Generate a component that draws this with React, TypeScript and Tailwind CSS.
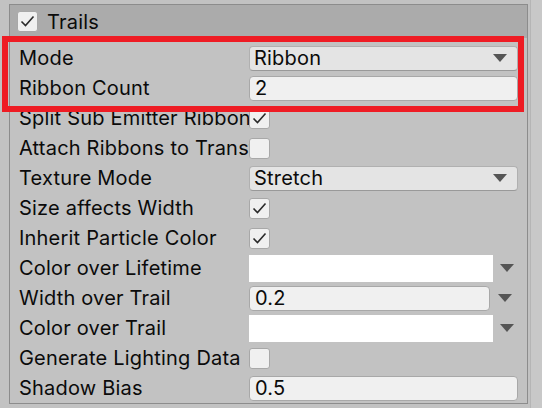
import React from "react";

type Row =
  | { label: string; kind: "dropdown"; value: string }
  | { label: string; kind: "text"; value: string }
  | { label: string; kind: "check"; checked: boolean }
  | { label: string; kind: "color" }
  | { label: string; kind: "curve"; value: string };

const ROWS: Row[] = [
  { label: "Mode", kind: "dropdown", value: "Ribbon" },
  { label: "Ribbon Count", kind: "text", value: "2" },
  { label: "Split Sub Emitter Ribbons", kind: "check", checked: true },
  { label: "Attach Ribbons to Transform", kind: "check", checked: false },
  { label: "Texture Mode", kind: "dropdown", value: "Stretch" },
  { label: "Size affects Width", kind: "check", checked: true },
  { label: "Inherit Particle Color", kind: "check", checked: true },
  { label: "Color over Lifetime", kind: "color" },
  { label: "Width over Trail", kind: "curve", value: "0.2" },
  { label: "Color over Trail", kind: "color" },
  { label: "Generate Lighting Data", kind: "check", checked: false },
  { label: "Shadow Bias", kind: "text", value: "0.5" },
];

function Triangle() {
  return (
    <svg width="14" height="8" viewBox="0 0 14 8" className="shrink-0">
      <path d="M0 0 H14 L7 8 Z" fill="#555555" />
    </svg>
  );
}

function Checkbox({ checked }: { checked: boolean }) {
  return (
    <div className="flex h-[21px] w-[21px] items-center justify-center rounded-[3px] border border-[#a8a8a8] bg-[#f0f0f0]">
      {checked && (
        <svg width="17" height="17" viewBox="0 0 17 17">
          <path d="M2.5 8.5 L6.5 12.5 L14.5 3.5" fill="none" stroke="#2a2a2a" strokeWidth="1.6" />
        </svg>
      )}
    </div>
  );
}

function Field({ row }: { row: Row }) {
  switch (row.kind) {
    case "dropdown":
      return (
        <div className="flex h-[25px] w-[269px] items-center justify-between rounded-[4px] border border-[#b0b0b0] border-b-[#999] bg-[#e4e4e4] pl-[4px] pr-[10px]">
          <span>{row.value}</span>
          <Triangle />
        </div>
      );
    case "text":
      return (
        <div className="flex h-[25px] w-[269px] items-center rounded-[4px] border border-[#a8a8a8] bg-[#f0f0f0] pl-[5px]">
          {row.value}
        </div>
      );
    case "check":
      return <Checkbox checked={row.checked} />;
    case "color":
      return (
        <div className="flex items-center">
          <div className="h-[27px] w-[244px] bg-white" />
          <div className="ml-[7px]">
            <Triangle />
          </div>
        </div>
      );
    case "curve":
      return (
        <div className="flex items-center">
          <div className="flex h-[25px] w-[241px] items-center rounded-[4px] border border-[#a8a8a8] bg-[#f0f0f0] pl-[5px]">
            {row.value}
          </div>
          <div className="ml-[8px]">
            <Triangle />
          </div>
        </div>
      );
  }
}

export default function App() {
  return (
    <div
      className="relative flex h-[408px] w-[542px] overflow-hidden bg-[#c2c2c2] text-[20px] tracking-[0.2px] text-[#0b0b0b]"
      style={{ fontFamily: "Inter, 'Noto Sans', sans-serif" }}
    >
      <div className="ml-[9px] mt-[4px] h-[400px] w-[519px] border border-[#8c8c8c]">
        <div className="flex h-[33px] items-center bg-[#ababab] pl-[7px]">
          <Checkbox checked />
          <span className="ml-[9px]">Trails</span>
        </div>
        <div className="pt-[5px]">
          {ROWS.map((row) => (
            <div key={row.label} className="flex h-[30px] items-center">
              <div className="w-[239px] shrink-0 overflow-hidden whitespace-nowrap pl-[9px]">{row.label}</div>
              <Field row={row} />
            </div>
          ))}
        </div>
      </div>
      <div className="ml-[2px] w-[12px] border-l border-[#b5b5b5] bg-[#c8c8c8]" />
      <div className="pointer-events-none absolute left-[2px] top-[36px] h-[76px] w-[522px] border-[6px] border-[#ee1c24]" />
    </div>
  );
}
